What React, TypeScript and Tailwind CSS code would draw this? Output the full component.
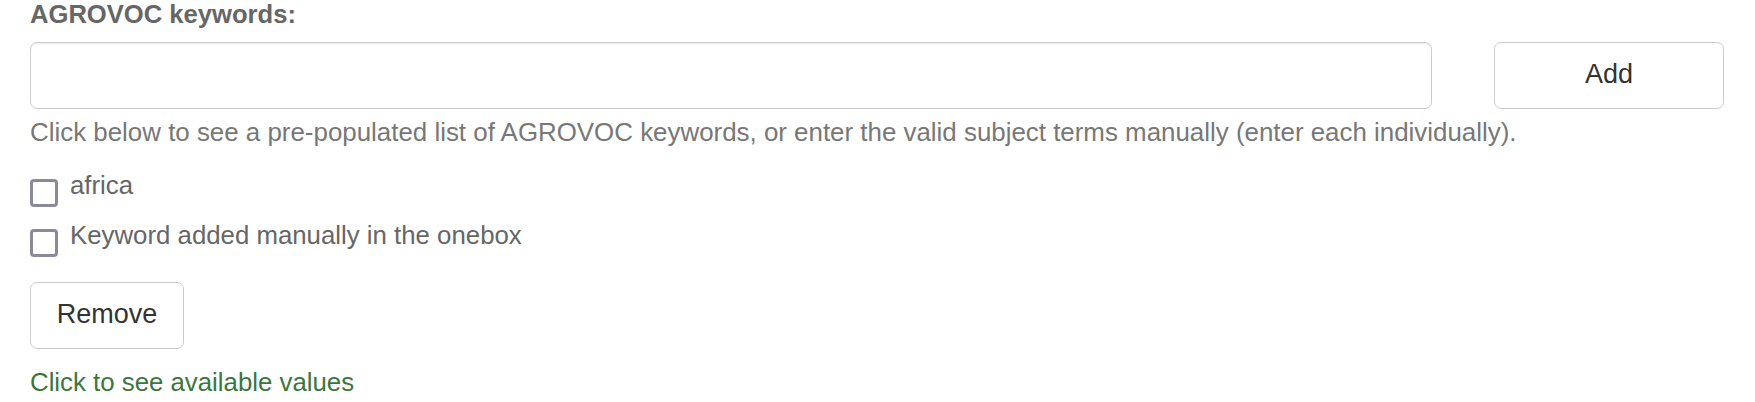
import { useState } from 'react';

const keywords = ['africa', 'Keyword added manually in the onebox'];

export default function App() {
  const [value, setValue] = useState('');
  const [checked, setChecked] = useState<Record<string, boolean>>({});

  return (
    <div className="w-[1755px] h-[402px] bg-white pl-[30px] pr-[31px] font-['Liberation_Sans',Arial,sans-serif] overflow-hidden">
      {/* Label */}
      <div className="text-[25.6px] leading-[28px] font-bold text-[#666666]">AGROVOC keywords:</div>

      {/* Input + add */}
      <div className="mt-[14px] flex gap-[62px]">
        <input
          type="text"
          value={value}
          onChange={(e) => setValue(e.target.value)}
          className="flex-1 h-[67px] rounded-[7px] border-[1.5px] border-[#cccccc] bg-white px-4 text-[25px] text-[#555] outline-none shadow-[inset_0_1px_1px_rgba(0,0,0,0.075)]"
        />
        <button className="w-[230px] h-[67px] pb-[2px] rounded-[7px] border-[1.5px] border-[#cccccc] bg-white text-[27px] text-[#333333]">
          Add
        </button>
      </div>

      {/* Help text */}
      <p className="mt-[8px] text-[25.9px] leading-[30px] text-[#777777] whitespace-nowrap">
        Click below to see a pre-populated list of AGROVOC keywords, or enter the valid subject terms manually (enter each individually).
      </p>

      {/* Checkbox list */}
      <div className="mt-[23px]">
        {keywords.map((k) => (
          <label key={k} className="flex items-start h-[50px] cursor-pointer">
            <span
              onClick={() => setChecked({ ...checked, [k]: !checked[k] })}
              className="mt-[9px] w-[28px] h-[28px] shrink-0 rounded-[4px] border-[3px] border-[#8b8a99] bg-white"
            />
            <span className="ml-[12px] text-[25.8px] leading-[30px] text-[#666666]">{k}</span>
          </label>
        ))}
      </div>

      {/* Remove */}
      <button className="mt-[12px] w-[154px] h-[67px] pb-[2px] rounded-[7px] border-[1.5px] border-[#cccccc] bg-white text-[27px] text-[#333333]">
        Remove
      </button>

      {/* Link */}
      <div className="mt-[18px] text-[25.8px] leading-[30px] text-[#3c763d] cursor-pointer">Click to see available values</div>
    </div>
  );
}
